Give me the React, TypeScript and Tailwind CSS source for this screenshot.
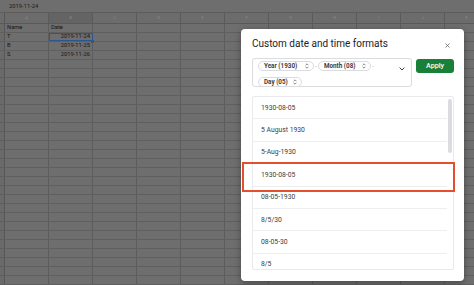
import React from "react";

const COLS = ["A", "B", "C", "D", "E", "F", "G", "H", "I", "J", "K"];
const DATA: Record<number, [string, string]> = {
  0: ["Name", "Date"],
  1: ["T", "2019-11-24"],
  2: ["B", "2019-11-25"],
  3: ["S", "2019-11-26"],
};

const FORMATS = [
  "1930-08-05",
  "5 August 1930",
  "5-Aug-1930",
  "1930-08-05",
  "08-05-1930",
  "8/5/30",
  "08-05-30",
  "8/5",
];

function Unfold() {
  return (
    <svg width="4" height="6" viewBox="0 0 4 6" fill="none" stroke="#5f6368" strokeWidth="0.8">
      <path d="M0.6 2.2 L2 0.8 L3.4 2.2" />
      <path d="M0.6 3.8 L2 5.2 L3.4 3.8" />
    </svg>
  );
}

function Chip({ label, w }: { label: string; w: string }) {
  return (
    <div
      className={`${w} h-[10px] flex items-center justify-between pl-[5px] pr-[4px] rounded-full border border-[#dadce0] bg-white text-[6.3px] font-bold text-[#3c4043] leading-none`}
    >
      <span>{label}</span>
      <Unfold />
    </div>
  );
}

export default function App() {
  const rows = Array.from({ length: 30 }, (_, i) => i);
  return (
    <div
      className="relative w-[474px] h-[285px] overflow-hidden bg-[#6e6e6e]"
      style={{ fontFamily: "Roboto, 'Liberation Sans', Arial, sans-serif" }}
    >
      {/* formula bar */}
      <div className="h-[13px] border-b border-[#5c5c5c] flex items-center pl-[9px] text-[5.8px] text-[#1a1a1a]">
        2019-11-24
      </div>
      {/* column headers */}
      <div className="h-[11px] flex border-b border-[#595959] bg-[#6c6c6c]">
        <div className="w-[5px] shrink-0 border-r border-[#565656]" />
        {COLS.map((c, i) => (
          <div
            key={c}
            className={`w-[44px] shrink-0 border-r border-[#5b5b5b] flex items-center justify-center text-[4px] text-[#8a8a8a] ${i === 1 ? "bg-[#646464]" : ""}`}
          >
            {c}
          </div>
        ))}
      </div>
      {/* rows */}
      {rows.map((r) => (
        <div key={r} className="h-[9px] flex border-b border-[#5f5f5f]">
          <div className="w-[5px] shrink-0 border-r border-[#565656] bg-[#6a6a6a]" />
          {COLS.map((c, i) => {
            const d = DATA[r];
            const txt = d && i < 2 ? d[i] : "";
            const sel = r === 1 && i === 1;
            return (
              <div
                key={c}
                className={`relative w-[44px] shrink-0 border-r border-[#5d5d5d] flex items-center text-[5.8px] text-[#161616] leading-none ${
                  i === 1 && r > 0 ? "justify-end pr-[2px]" : "pl-[2px]"
                } ${sel ? "outline outline-[1.5px] -outline-offset-1 outline-[#2d5596]" : ""}`}
              >
                {txt}
                {sel && (
                  <div className="absolute right-[-2px] bottom-[-2px] w-[3px] h-[3px] bg-[#2d5596]" />
                )}
              </div>
            );
          })}
        </div>
      ))}

      {/* dialog */}
      <div className="absolute left-[241px] top-[29px] w-[223px] h-[252px] bg-white rounded-[4px] shadow-[0_2px_6px_rgba(0,0,0,0.35)] flex flex-col pt-[8px] pl-[11px] pr-[10px]">
        <div className="h-[14px] flex items-center justify-between">
          <span className="text-[10px] text-[#202124] leading-none">Custom date and time formats</span>
          <svg width="5" height="5" viewBox="0 0 5 5" className="mr-[4px] mt-[2px]" stroke="#5f6368" strokeWidth="0.8">
            <path d="M0.5 0.5 L4.5 4.5 M4.5 0.5 L0.5 4.5" />
          </svg>
        </div>
        <div className="mt-[7px] flex items-start justify-between">
          <div className="w-[160px] h-[29px] border border-[#dadce0] rounded-[3px] flex items-start pl-[5px] pt-[2px] pr-[6px]">
            <div className="flex-1 flex flex-wrap gap-y-[3px] items-center">
              <Chip label="Year (1930)" w="w-[56px]" />
              <span className="w-[4px] text-center text-[6px] text-[#9aa0a6] leading-none">-</span>
              <Chip label="Month (08)" w="w-[53px]" />
              <span className="w-[4px] text-center text-[6px] text-[#9aa0a6] leading-none">-</span>
              <div className="w-full" />
              <Chip label="Day (05)" w="w-[44px]" />
            </div>
            <svg width="6" height="4" viewBox="0 0 6 4" className="mt-[6px]" fill="none" stroke="#3c4043" strokeWidth="1">
              <path d="M0.6 0.6 L3 3 L5.4 0.6" />
            </svg>
          </div>
          <div className="mt-[1px] w-[38px] h-[14px] rounded-[3px] bg-[#188038] text-white text-[7.2px] font-medium flex items-center justify-center">
            Apply
          </div>
        </div>
        <div className="mt-[9px] h-[174px] relative border border-[#e8eaed] rounded-[2px] overflow-hidden">
          <div className="pr-[6px]">
            {FORMATS.map((f, i) => (
              <div
                key={i}
                className="h-[22.4px] border-b border-[#eceef0] flex items-center pl-[8px] text-[6.8px] text-[#3c4043]"
              >
                {f}
              </div>
            ))}
          </div>
          <div className="absolute right-[1px] top-[2px] w-[4px] h-[54px] rounded-full bg-[#dadce0]" />
        </div>
      </div>

      {/* red annotation box */}
      <div className="absolute left-[242px] top-[162px] w-[213px] h-[30px] border-2 border-[#e4502f]" />
    </div>
  );
}
